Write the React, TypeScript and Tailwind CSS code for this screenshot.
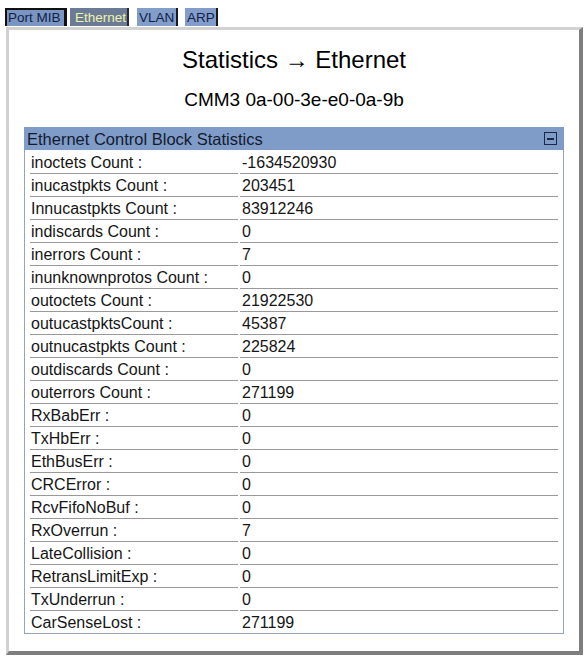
import React from "react";

const rows: [string, string][] = [
  ["inoctets Count :", "-1634520930"],
  ["inucastpkts Count :", "203451"],
  ["Innucastpkts Count :", "83912246"],
  ["indiscards Count :", "0"],
  ["inerrors Count :", "7"],
  ["inunknownprotos Count :", "0"],
  ["outoctets Count :", "21922530"],
  ["outucastpktsCount :", "45387"],
  ["outnucastpkts Count :", "225824"],
  ["outdiscards Count :", "0"],
  ["outerrors Count :", "271199"],
  ["RxBabErr :", "0"],
  ["TxHbErr :", "0"],
  ["EthBusErr :", "0"],
  ["CRCError :", "0"],
  ["RcvFifoNoBuf :", "0"],
  ["RxOverrun :", "7"],
  ["LateCollision :", "0"],
  ["RetransLimitExp :", "0"],
  ["TxUnderrun :", "0"],
  ["CarSenseLost :", "271199"],
];

export default function App() {
  return (
    <div
      className="w-[588px] h-[664px] bg-white pl-[5px] pt-[8px] text-[#111]"
      style={{ fontFamily: '"Liberation Sans", Arial, sans-serif' }}
    >
      <div className="flex items-end h-[18px] text-[13.5px] leading-[16px]">
        <div className="h-[18px] w-[62px] bg-[#7b95c2] border-l-2 border-t-2 border-r-[3px] border-[#111] text-[#0f1f48] pl-[1px]">
          Port MIB
        </div>
        <div className="ml-[3px] h-[18px] w-[59px] bg-[#6c7b95] border-r-2 border-[#2a2a2a] text-[#eef3a6] pl-[5px] pt-[2px] whitespace-nowrap">
          Ethernet
        </div>
        <div className="ml-[8px] h-[18px] w-[41px] bg-[#839dca] border-r-2 border-[#1a1a1a] text-[#0f1f48] pl-[2px] pt-[2px]">
          VLAN
        </div>
        <div className="ml-[7px] h-[18px] w-[33px] bg-[#839dca] border-r-2 border-[#1a1a1a] text-[#0f1f48] pl-[2px] pt-[2px]">
          ARP
        </div>
      </div>
      <div className="ml-[1px] mt-[1px] w-[577px] h-[628px] border-l-[3px] border-t-[3px] border-r-[4px] border-b-[4px] border-l-[#d2d2d2] border-t-[#d2d2d2] border-r-[#7e7e7e] border-b-[#7e7e7e] px-[15px]">
        <div className="text-center text-[24px] leading-[28px] mt-[16px] text-black">
          Statistics → Ethernet
        </div>
        <div className="text-center text-[19px] leading-[22px] mt-[15px] text-black">
          CMM3 0a-00-3e-e0-0a-9b
        </div>
        <div className="mt-[16px] w-[540px]">
          <div className="h-[23px] bg-[#7f9cc9] flex items-center justify-between pl-[3px] pr-[7px]">
            <span className="text-[16.5px] leading-[20px] text-[#141a2e]">
              Ethernet Control Block Statistics
            </span>
            <span className="w-[13px] h-[13px] border border-[#1b2747] flex items-center justify-center">
              <span className="block w-[7px] h-[2px] bg-[#1b2747]" />
            </span>
          </div>
          <div className="border-l border-r border-b border-[#97a4b9] px-[5px] pt-[1px] text-[16px] leading-[20px] text-[#151515]">
            {rows.map(([k, v], i) => {
              const last = i === rows.length - 1;
              return (
                <div key={i} className="flex gap-[2px] mt-[2px]">
                  <div
                    className={
                      last
                        ? "w-[208px] h-[20px] pl-[1px]"
                        : "w-[208px] h-[21px] pl-[1px] border-b border-[#999]"
                    }
                  >
                    {k}
                  </div>
                  <div
                    className={
                      last
                        ? "flex-1 h-[20px] pl-[2px]"
                        : "flex-1 h-[21px] pl-[2px] border-b border-[#999]"
                    }
                  >
                    {v}
                  </div>
                </div>
              );
            })}
          </div>
        </div>
      </div>
    </div>
  );
}
